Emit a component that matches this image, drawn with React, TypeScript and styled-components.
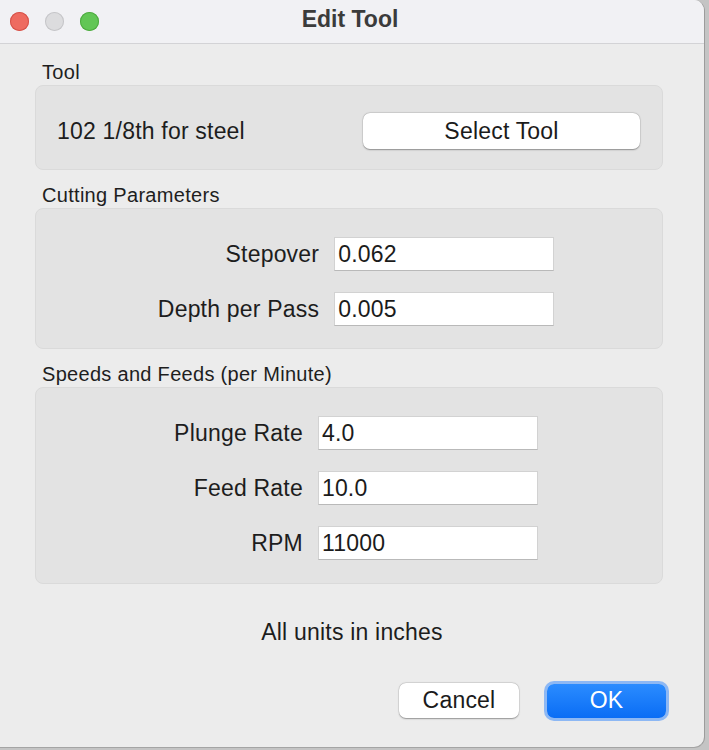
import styled, { createGlobalStyle } from "styled-components";

const GlobalStyle = createGlobalStyle`
  html, body {
    margin: 0;
    padding: 0;
    background: #c4c4c4;
    font-family: "Liberation Sans", Arial, sans-serif;
    color: #1d1d1d;
  }
`;

const Window = styled.div`
  width: 704px;
  height: 747px;
  background: #ececec;
  border-right: 1px solid #9c9c9c;
  border-bottom: 1px solid #a4a4a4;
  border-radius: 0 11px 11px 0;
  overflow: hidden;
  display: flex;
  flex-direction: column;
`;

const TitleBar = styled.div`
  height: 43px;
  flex-shrink: 0;
  background: #f1f1f4;
  border-bottom: 1px solid #d3d3d6;
  display: grid;
  grid-template-columns: 1fr auto 1fr;
  align-items: center;
  padding: 0 10px;
`;

const Lights = styled.div`
  display: flex;
  gap: 16px;
`;

const Light = styled.span<{ $fill: string; $edge: string }>`
  width: 19px;
  height: 19px;
  border-radius: 50%;
  background: ${(p) => p.$fill};
  box-shadow: inset 0 0 0 1px ${(p) => p.$edge};
`;

const Title = styled.div`
  font-weight: bold;
  font-size: 23px;
  color: #3b3b3b;
  margin: -5px 4px 0 0;
`;

const Content = styled.div`
  flex: 1;
  display: flex;
  flex-direction: column;
  padding: 16px 41px 0 35px;
`;

const Group = styled.section`
  display: flex;
  flex-direction: column;
  & + & {
    margin-top: 13px;
  }
`;

const GroupLabel = styled.div`
  font-size: 20px;
  letter-spacing: 0.3px;
  line-height: 24px;
  margin: 0 0 1px 7px;
  color: #1e1e1e;
`;

const Box = styled.div`
  background: #e3e3e3;
  border: 1px solid #dadada;
  border-radius: 8px;
`;

const ToolRow = styled(Box)`
  height: 85px;
  box-sizing: border-box;
  display: flex;
  align-items: center;
  justify-content: space-between;
  padding: 7px 22px 0 21px;
`;

const ToolName = styled.span`
  font-size: 23px;
  letter-spacing: 0.2px;
`;

const Button = styled.button`
  font-family: inherit;
  font-size: 23px;
  letter-spacing: 0.2px;
  color: #1b1b1b;
  background: #fff;
  border: none;
  border-radius: 7px;
  box-shadow: 0 0.5px 1.5px rgba(0, 0, 0, 0.35), 0 0 0 0.5px rgba(0, 0, 0, 0.08);
  padding: 0;
  height: 36px;
`;

const SelectButton = styled(Button)`
  width: 277px;
`;

const Form = styled(Box)<{ $top: number; $bottom: number }>`
  display: grid;
  grid-template-columns: auto 220px;
  justify-content: center;
  column-gap: 15px;
  row-gap: 21px;
  align-items: center;
  padding: ${(p) => p.$top}px 0 ${(p) => p.$bottom}px 14px;
`;

const FieldLabel = styled.label`
  font-size: 23px;
  letter-spacing: 0.2px;
  text-align: right;
`;

const Field = styled.input`
  box-sizing: border-box;
  height: 34px;
  width: 220px;
  border: 1px solid #d2d2d2;
  border-bottom-color: #b9b9b9;
  background: #fff;
  font-family: inherit;
  font-size: 23px;
  letter-spacing: 0.2px;
  color: #1b1b1b;
  padding: 0 3px;
  outline: none;
`;

const Note = styled.div`
  text-align: center;
  font-size: 23px;
  letter-spacing: 0.2px;
  line-height: 24px;
  margin-top: 36px;
  padding-left: 6px;
`;

const Actions = styled.div`
  display: flex;
  justify-content: flex-end;
  align-items: center;
  gap: 28px;
  margin: 39px -3px 0 0;
`;

const CancelButton = styled(Button)`
  width: 120px;
  height: 35px;
`;

const OkButton = styled(Button)`
  width: 119px;
  height: 34px;
  color: #fff;
  background: linear-gradient(#2b8cff, #0a6df5);
  box-shadow: 0 0 0 3px #8db8f4;
`;

const cutting = [
  { label: "Stepover", value: "0.062" },
  { label: "Depth per Pass", value: "0.005" },
];

const speeds = [
  { label: "Plunge Rate", value: "4.0" },
  { label: "Feed Rate", value: "10.0" },
  { label: "RPM", value: "11000" },
];

const App = () => {
  return (
    <>
      <GlobalStyle />
      <Window>
        <TitleBar>
          <Lights>
            <Light $fill="#ee6b60" $edge="#d45249" />
            <Light $fill="#dcdcde" $edge="#c5c5c8" />
            <Light $fill="#62c655" $edge="#4ea940" />
          </Lights>
          <Title>Edit Tool</Title>
          <span />
        </TitleBar>
        <Content>
          <Group>
            <GroupLabel>Tool</GroupLabel>
            <ToolRow>
              <ToolName>102 1/8th for steel</ToolName>
              <SelectButton>Select Tool</SelectButton>
            </ToolRow>
          </Group>
          <Group>
            <GroupLabel>Cutting Parameters</GroupLabel>
            <Form $top={28} $bottom={22}>
              {cutting.map((f) => [
                <FieldLabel key={f.label + "-l"}>{f.label}</FieldLabel>,
                <Field key={f.label} defaultValue={f.value} />,
              ])}
            </Form>
          </Group>
          <Group>
            <GroupLabel>Speeds and Feeds (per Minute)</GroupLabel>
            <Form $top={28} $bottom={23}>
              {speeds.map((f) => [
                <FieldLabel key={f.label + "-l"}>{f.label}</FieldLabel>,
                <Field key={f.label} defaultValue={f.value} />,
              ])}
            </Form>
          </Group>
          <Note>All units in inches</Note>
          <Actions>
            <CancelButton>Cancel</CancelButton>
            <OkButton>OK</OkButton>
          </Actions>
        </Content>
      </Window>
    </>
  );
};

export default App;
